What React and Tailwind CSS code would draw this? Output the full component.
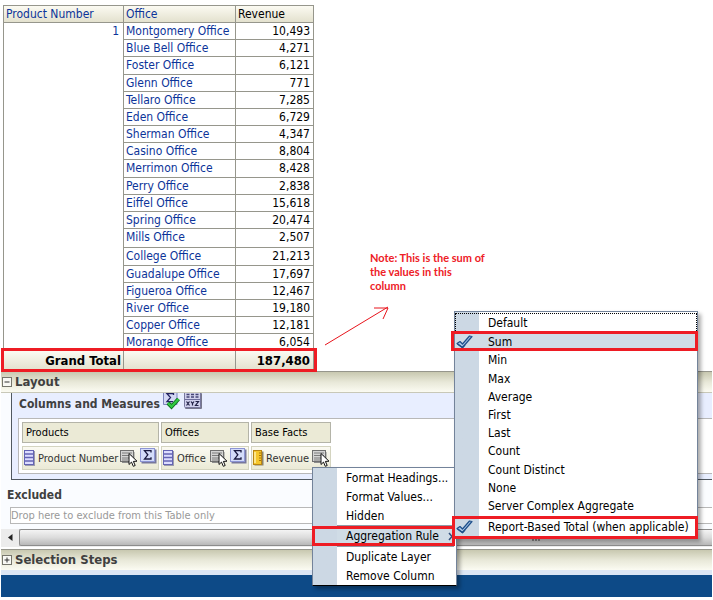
import React from "react";

const rows = [
  ["Montgomery Office", "10,493", "h-[17px]"],
  ["Blue Bell Office", "4,271", "h-[17px]"],
  ["Foster Office", "6,121", "h-[18px]"],
  ["Glenn Office", "771", "h-[17px]"],
  ["Tellaro Office", "7,285", "h-[17px]"],
  ["Eden Office", "6,729", "h-[17px]"],
  ["Sherman Office", "4,347", "h-[17px]"],
  ["Casino Office", "8,804", "h-[17px]"],
  ["Merrimon Office", "8,428", "h-[18px]"],
  ["Perry Office", "2,838", "h-[17px]"],
  ["Eiffel Office", "15,618", "h-[17px]"],
  ["Spring Office", "20,474", "h-[17px]"],
  ["Mills Office", "2,507", "h-[19px]"],
  ["College Office", "21,213", "h-[18px]"],
  ["Guadalupe Office", "17,697", "h-[17px]"],
  ["Figueroa Office", "12,467", "h-[17px]"],
  ["River Office", "19,180", "h-[17px]"],
  ["Copper Office", "12,181", "h-[17px]"],
  ["Morange Office", "6,054", "h-[17px]"],
];

const aggregations = [
  "Default",
  "Sum",
  "Min",
  "Max",
  "Average",
  "First",
  "Last",
  "Count",
  "Count Distinct",
  "None",
  "Server Complex Aggregate",
];

function CheckMark() {
  return (
    <svg width="17" height="14" viewBox="0 0 17 14" aria-hidden="true">
      <path d="M1 8.500 L4 6.500 L6.500 9 L13.500 1 L16 1.500 L6.500 12.500 Z" fill="#a9c6e6" stroke="#1d4e89" strokeWidth="1.2" strokeLinejoin="round" />
      <path d="M1.500 9 L6.500 12.700 L9 10" fill="none" stroke="#1d4e89" strokeWidth="1.300" />
    </svg>
  );
}

function ColumnIcon() {
  return (
    <svg width="12" height="16" viewBox="0 0 12 16" className="shrink-0" aria-hidden="true">
      <rect x="1" y="1" width="10" height="15" fill="#9c9cac" />
      <rect x="0.5" y="0.5" width="9" height="14" fill="#dcdcff" stroke="#6464b4" />
      <path d="M1 4h8M1 7.500h8M1 11h8" stroke="#6464b4" strokeWidth="1.3" />
    </svg>
  );
}

function MeasureIcon() {
  return (
    <svg width="11" height="16" viewBox="0 0 11 16" className="shrink-0" aria-hidden="true">
      <rect x="1.500" y="1.500" width="9" height="14" fill="#8d8468" />
      <rect x="0.5" y="0.5" width="8" height="14" fill="#f5c62c" stroke="#b98512" />
      <path d="M2 2v11" stroke="#fff0a8" strokeWidth="1.5" />
      <path d="M6 3h2M6 5.500h2M6 8h2M6 10.500h2" stroke="#a87408" />
    </svg>
  );
}

function MenuCursorIcon() {
  return (
    <svg width="18" height="19" viewBox="0 0 18 19" aria-hidden="true">
      <path d="M2 13.500h12V3" fill="none" stroke="#8c8c8c" />
      <rect x="0.5" y="1.500" width="13" height="11" fill="#d4d4d4" stroke="#707070" />
      <path d="M2 4h10M2 6.500h10M2 9h8M2 11h6" stroke="#7c7c7c" />
      <path d="M9 4.500 L9 15.500 L11.500 13.100 L13.300 17.300 L15.200 16.500 L13.400 12.400 L17 12.200 Z" fill="#fff" stroke="#111" />
    </svg>
  );
}

function SigmaIcon() {
  return (
    <svg width="17" height="16" viewBox="0 0 17 16" aria-hidden="true">
      <rect x="1.500" y="1.500" width="15" height="14" fill="#77779c" />
      <rect x="0.5" y="0.5" width="14" height="13" fill="#d4dcfa" stroke="#8c94d4" />
      <path d="M11 4.500V2.700H4.500L7.800 6.800 4.500 11H11V9.200" fill="none" stroke="#1a1a40" strokeWidth="1.300" />
    </svg>
  );
}

function SigmaCheckIcon() {
  return (
    <svg width="17" height="17" viewBox="0 0 17 17" aria-hidden="true">
      <path d="M0.500 0V11.500H14V0" fill="#d4d8f4" stroke="#7c84bc" />
      <path d="M10.500 2V0.700H4L7.500 4.500 4 8.700H10" fill="none" stroke="#222260" strokeWidth="1.300" />
      <path d="M5 10 L8.500 13.500 L15.500 6" fill="none" stroke="#0b6b18" strokeWidth="4" />
      <path d="M5 10 L8.500 13.500 L15.500 6" fill="none" stroke="#30c942" strokeWidth="2.400" />
    </svg>
  );
}

function XyzIcon() {
  return (
    <svg width="18" height="16" viewBox="0 0 18 16" aria-hidden="true">
      <rect x="1" y="0" width="17" height="16" rx="1" fill="#77778c" />
      <rect x="0.500" y="-1" width="16" height="15.500" rx="1" fill="#d0d0ec" stroke="#77779c" />
      <path d="M2.500 1.500h3M7 1.500h3M11.500 1.500h3M2.500 4h3M7 4h3M11.500 4h3" stroke="#444474" strokeWidth="1.500" />
      <path d="M1 6.500h15" stroke="#6c6c9c" />
      <path d="M2.500 8.500l3 4M5.500 8.500l-3 4M7 8.500l1.500 2 1.500-2M8.500 10.500v2M11.500 8.500h3l-3 4h3" fill="none" stroke="#202045" strokeWidth="1.200" />
    </svg>
  );
}

function ToggleIcon({ plus }) {
  return (
    <svg width="10" height="10" viewBox="0 0 10 10" aria-hidden="true">
      <rect x="0.500" y="0.500" width="9" height="9" fill="#f8f8f4" stroke="#75756c" />
      <path d={plus ? "M2.500 5h5M5 2.500v5" : "M2.500 5h5"} stroke="#333" />
    </svg>
  );
}

function SectionHeader({ title, plus }) {
  return (
    <h2 className="border-t border-[#96968c] text-[13px] leading-4 font-bold text-[#404040]">
      <button className="flex h-5 w-full items-center gap-[3px] bg-linear-to-b from-[#c8c8b0] via-[#e8e8d8] to-[#fbfbf2] pl-px" aria-expanded={!plus}>
        <ToggleIcon plus={plus} />
        {title}
      </button>
    </h2>
  );
}

function Measure({ group, name, icon, sigma, width }) {
  return (
    <div className={`flex flex-col gap-[3px] ${width}`}>
      <div className="h-[21px] border border-[#b4b4a8] bg-[#ebead6] pl-[3px] text-[11px] leading-[20px] text-black">{group}</div>
      <div className="flex h-6 items-center border border-[#d4d4c0] bg-linear-to-b from-[#fbfaf2] to-[#ebead6] pl-px">
        {icon}
        <span className="ml-[2px] pt-[2px] text-[11px] leading-4 whitespace-nowrap text-[#333]">{name}</span>
        <button className="ml-auto shrink-0" aria-label={`${name} options`}><MenuCursorIcon /></button>
        {sigma && <button className="mr-px ml-[2px] shrink-0 self-start pt-px" aria-label={`${name} totals`}><SigmaIcon /></button>}
      </div>
    </div>
  );
}

export default function App() {
  return (
    <div className="relative overflow-hidden bg-white px-px font-['DejaVu_Sans_Condensed','DejaVu_Sans',sans-serif] text-[12px] leading-4 text-black">
      <div className="relative pt-[5px] pl-[2px]">
        <table className="w-[311px] table-fixed border-collapse [&_td]:border [&_td]:border-[#96968c] [&_td]:align-top [&_th]:border [&_th]:border-[#96968c]">
          <colgroup>
            <col className="w-[120px]" />
            <col className="w-[112px]" />
            <col className="w-[78px]" />
          </colgroup>
          <thead>
            <tr className="h-[17px] bg-linear-to-b from-[#fbfaf2] to-[#e2e0cc] text-left [&_th]:p-0 [&_th]:pl-[2px] [&_th]:font-normal">
              <th className="text-[#0c3499]">Product Number</th>
              <th className="text-[#0c3499]">Office</th>
              <th>Revenue</th>
            </tr>
          </thead>
          <tbody>
            {rows.map(([office, revenue, height], i) => (
              <tr key={office} className={height}>
                {i === 0 && (
                  <td rowSpan={rows.length} className="p-0 pr-1 text-right text-[#0c3499]">1</td>
                )}
                <td className="p-0 pl-[2px] whitespace-nowrap text-[#0c3499]">{office}</td>
                <td className="p-0 pr-[3px] text-right">{revenue}</td>
              </tr>
            ))}
          </tbody>
          <tfoot>
            <tr className="h-[20px] bg-linear-to-b from-[#fbfaf2] to-[#e2e0cc] text-[13px] leading-[19px] font-bold">
              <td className="p-0 pr-[2px] text-right">Grand Total</td>
              <td className="p-0"></td>
              <td className="p-0 pr-[3px] text-right">187,480</td>
            </tr>
          </tfoot>
        </table>
        <div className="absolute top-[348px] left-0 z-10 h-[24px] w-[316px] border-3 border-[#ee1c24]" />
        <p className="absolute top-[251px] left-[369px] font-['Lato',sans-serif] text-[11px] leading-[14px] font-bold whitespace-nowrap text-[#ee2026]">
          Note: This is the sum of<br />the values in this<br />column
        </p>
        <svg className="absolute top-[304px] left-[323px]" width="68" height="44" viewBox="0 0 68 44" aria-hidden="true">
          <path d="M1 41 L64 3 M50 4 H64 L59 15" fill="none" stroke="#e8141c" />
        </svg>
      </div>

      <section>
        <SectionHeader title="Layout" />
        <div className="border-t border-[#c8c8b8] bg-[#fafcff] pl-[10px]">
          <div className="border-b border-l border-[#505860] bg-[#e8eeff] pb-[5px] pl-[6px]">
            <h3 className="flex h-[25px] items-start gap-[3px] pl-px text-[12px] leading-[22px] font-bold text-[#404040]">
              Columns and Measures
              <button aria-label="Totals"><SigmaCheckIcon /></button>
              <button className="pl-px" aria-label="Labels"><XyzIcon /></button>
            </h3>
            <div className="flex gap-[2px] border border-r-0 border-[#b8b8b8] bg-white p-[3px]">
              <Measure group="Products" name="Product Number" icon={<ColumnIcon />} sigma width="w-[137px]" />
              <Measure group="Offices" name="Office" icon={<ColumnIcon />} sigma width="w-[88px]" />
              <Measure group="Base Facts" name="Revenue" icon={<MeasureIcon />} width="w-[80px]" />
            </div>
          </div>
        </div>
        <div className="bg-[#fafcff] pt-[6px] pb-[5px] pl-[6px]">
          <label htmlFor="excluded" className="block text-[12px] leading-[18px] font-bold text-[#404040]">Excluded</label>
          <div className="pt-[3px] pl-[3px]">
            <input id="excluded" placeholder="Drop here to exclude from this Table only" className="block h-[17px] w-full border border-r-0 border-[#b8b8b8] bg-white text-[11px] placeholder:text-[#999]" />
          </div>
        </div>
        <div className="flex h-[18px] bg-[#ececec] pb-px">
          <button className="flex w-[18px] items-center justify-center" aria-label="Scroll left">
            <svg width="5" height="7" viewBox="0 0 5 7" aria-hidden="true"><path d="M4.500 0v7L0 3.500z" fill="#222" /></svg>
          </button>
          <div className="flex flex-1 items-end justify-end gap-px rounded-l-xs border border-r-0 border-[#8c8c8c] bg-linear-to-b from-[#f4f4f4] via-[#dcdcdc] to-[#b8b8b8] pr-[172px] pb-1">
            <span className="h-[3px] w-[2px] bg-[#888]" />
            <span className="h-[3px] w-[2px] bg-[#888]" />
            <span className="h-[3px] w-[2px] bg-[#888]" />
          </div>
        </div>
        <div className="pt-[2px]" />
        <SectionHeader title="Selection Steps" plus />
      </section>
      <footer className="h-[27px] border-t-5 border-[#dce6f4] bg-[#0d4a87]" />

      <div className="absolute top-[467px] left-[312px] flex h-[119px] w-[145px] flex-col border border-[#73839a] border-b-black bg-linear-to-r from-[#ccd8e4] from-[24px] to-white to-[24px] pt-px shadow-[3px_3px_4px_#00000055]" role="menu">
        {["Format Headings...", "Format Values...", "Hidden"].map((t) => (
          <button key={t} role="menuitem" className="h-[19px] pl-[33px] text-left">{t}</button>
        ))}
        <button role="menuitem" className="mr-[2px] ml-6 flex h-[22px] items-center justify-between border-y border-[#8f99a5] bg-[#d0dce6] pl-[9px]">
          Aggregation Rule
          <svg width="6" height="9" viewBox="0 0 6 9" aria-hidden="true"><path d="M1 1l3 3.500L1 8" fill="none" stroke="#34507c" strokeWidth="1.500" /></svg>
        </button>
        {["Duplicate Layer", "Remove Column"].map((t) => (
          <button key={t} role="menuitem" className="h-[19px] pl-[33px] text-left">{t}</button>
        ))}
      </div>
      <div className="absolute top-[526px] left-[312px] h-[20px] w-[143px] border-3 border-[#ee1c24]" />

      <div className="absolute top-[311px] left-[454px] flex h-[228px] w-[244px] flex-col border border-[#73839a] bg-linear-to-r from-[#ccd8e4] from-[24px] to-white to-[24px] pt-px shadow-[3px_3px_4px_#00000055]" role="menu">
        <div className="flex h-[202px] flex-col">
          {aggregations.map((t) => (
            <button
              key={t}
              role="menuitem"
              className={`flex flex-1 items-center text-left ${t === "Sum" ? "bg-[#d0dce6]" : ""} ${t === "Default" ? "border border-dotted border-black" : "px-px"}`}
            >
              <span className="w-8">{t === "Sum" && <CheckMark />}</span>
              {t}
            </button>
          ))}
        </div>
        <button role="menuitem" className="flex flex-1 items-center px-px whitespace-nowrap">
          <span className="w-8 shrink-0"><CheckMark /></span>
          Report-Based Total (when applicable)
        </button>
      </div>
      <div className="absolute top-[331px] left-[451px] h-[20px] w-[247px] border-3 border-[#ee1c24]" />
      <div className="absolute top-[516px] left-[452px] h-[23px] w-[246px] border-3 border-[#ee1c24]" />
    </div>
  );
}
